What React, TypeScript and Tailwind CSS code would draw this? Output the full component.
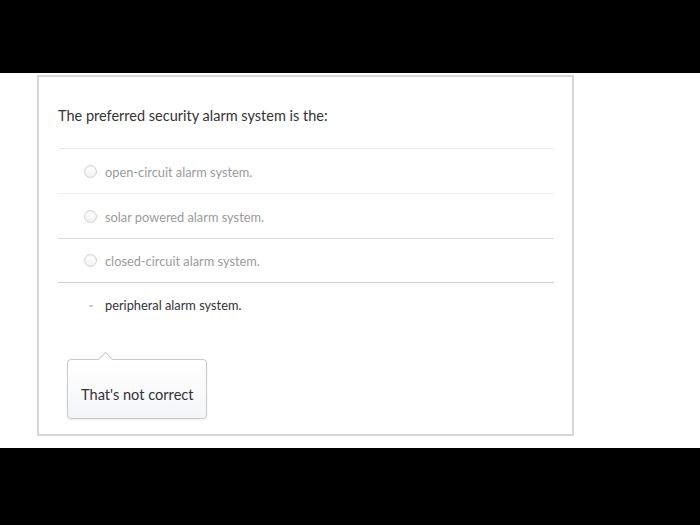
import React from "react";

const options = [
  "open-circuit alarm system.",
  "solar powered alarm system.",
  "closed-circuit alarm system.",
];

export default function App() {
  return (
    <div className="w-[700px] h-[525px] bg-black flex flex-col" style={{ fontFamily: "Lato, 'Open Sans', sans-serif" }}>
      <div className="h-[73px] shrink-0 bg-black" />
      <div className="h-[375px] shrink-0 bg-white pt-[2px]">
        <div className="ml-[37px] w-[537px] h-[361px] border-2 border-[#d6d6d6] bg-white px-[19px] pt-[29px]">
          <div className="text-[14.5px] leading-[20px] text-[#333]">The preferred security alarm system is the:</div>
          <div className="mt-[22px] mr-[-1px]">
            {options.map((o, i) => (
              <div
                key={o}
                className={`${i === 2 ? "h-[44px]" : "h-[45px]"} flex items-center border-t ${i === 2 ? "border-[#dcdcdc]" : "border-[#ececec]"}`}
              >
                <div className="ml-[26px] w-[13px] h-[13px] rounded-full border border-[#d3d3d3] bg-gradient-to-b from-white to-[#f1f1f1] shadow-[inset_0_1px_1px_rgba(0,0,0,0.05)]" />
                <span className="ml-[8px] text-[12.8px] text-[#9a9a9a] mt-[3px]">{o}</span>
              </div>
            ))}
            <div className="h-[45px] flex items-center border-t border-[#cfcfcf]">
              <div className="ml-[26px] w-[13px] h-[13px] flex items-center justify-center mt-[1px]">
                <div className="w-[4px] h-[2px] bg-[#c4c4c4] rounded-full" />
              </div>
              <span className="ml-[8px] text-[12.8px] text-[#333] mt-[1px]">peripheral alarm system.</span>
            </div>
          </div>
          <div className="relative mt-[32px] ml-[9px] w-[140px] h-[60px] rounded-[4px] border border-[#c9c9c9] bg-gradient-to-b from-white to-[#f4f5f8] shadow-[0_1px_2px_rgba(0,0,0,0.08)] flex items-center pl-[13px]">
            <div className="absolute -top-[6px] left-[32px] w-[11px] h-[11px] rotate-45 bg-white border-l border-t border-[#c9c9c9]" />
            <span className="text-[14.6px] text-[#333] mt-[11px]">That's not correct</span>
          </div>
        </div>
      </div>
      <div className="flex-1 bg-black" />
    </div>
  );
}
